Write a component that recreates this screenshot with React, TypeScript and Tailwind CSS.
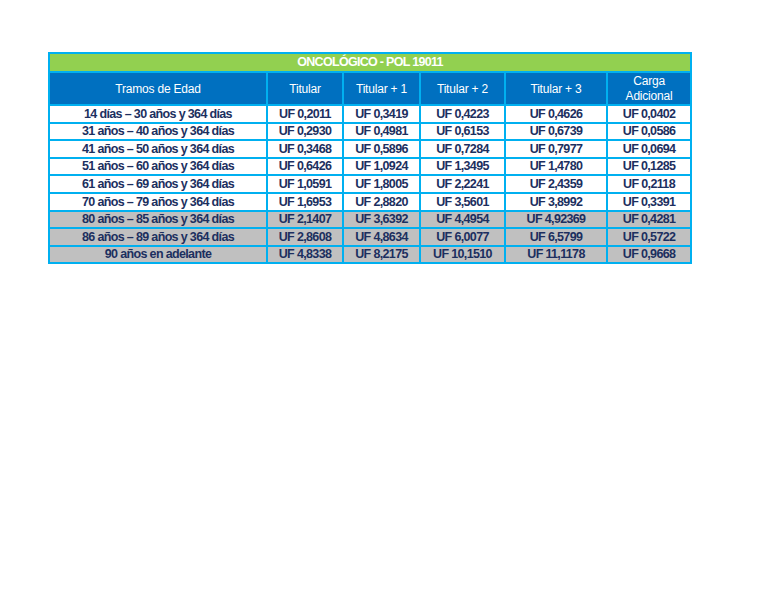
const rows: { edad: string; vals: string[]; gray?: boolean }[] = [
  { edad: '14 días – 30 años y 364 días', vals: ['UF 0,2011', 'UF 0,3419', 'UF 0,4223', 'UF 0,4626', 'UF 0,0402'] },
  { edad: '31 años – 40 años y 364 días', vals: ['UF 0,2930', 'UF 0,4981', 'UF 0,6153', 'UF 0,6739', 'UF 0,0586'] },
  { edad: '41 años – 50 años y 364 días', vals: ['UF 0,3468', 'UF 0,5896', 'UF 0,7284', 'UF 0,7977', 'UF 0,0694'] },
  { edad: '51 años – 60 años y 364 días', vals: ['UF 0,6426', 'UF 1,0924', 'UF 1,3495', 'UF 1,4780', 'UF 0,1285'] },
  { edad: '61 años – 69 años y 364 días', vals: ['UF 1,0591', 'UF 1,8005', 'UF 2,2241', 'UF 2,4359', 'UF 0,2118'] },
  { edad: '70 años – 79 años y 364 días', vals: ['UF 1,6953', 'UF 2,8820', 'UF 3,5601', 'UF 3,8992', 'UF 0,3391'] },
  { edad: '80 años – 85 años y 364 días', vals: ['UF 2,1407', 'UF 3,6392', 'UF 4,4954', 'UF 4,92369', 'UF 0,4281'], gray: true },
  { edad: '86 años – 89 años y 364 días', vals: ['UF 2,8608', 'UF 4,8634', 'UF 6,0077', 'UF 6,5799', 'UF 0,5722'], gray: true },
  { edad: '90 años en adelante', vals: ['UF 4,8338', 'UF 8,2175', 'UF 10,1510', 'UF 11,1178', 'UF 0,9668'], gray: true },
];

const headers = ['Titular', 'Titular + 1', 'Titular + 2', 'Titular + 3'];

export default function App() {
  return (
    <div className="min-h-[594px] w-[768px] bg-white pl-[48px] pt-[52px] font-['Liberation_Sans',Arial,sans-serif]">
      <table className="w-[642px] table-fixed border-collapse border-2 border-[#00b0f0] text-[12.5px] leading-none">
        <colgroup>
          <col className="w-[218px]" />
          <col className="w-[76px]" />
          <col className="w-[77px]" />
          <col className="w-[85px]" />
          <col className="w-[102px]" />
          <col className="w-[84px]" />
        </colgroup>
        <thead>
          <tr className="h-[19px] bg-[#92d050]">
            <th colSpan={6} className="border-2 border-[#00b0f0] p-0 text-center font-bold tracking-[-0.7px] text-white">
              ONCOLÓGICO - POL 19011
            </th>
          </tr>
          <tr className="h-[33px] bg-[#0070c0] text-[12px] tracking-[-0.2px] text-white">
            <th className="border-2 border-[#00b0f0] p-0 font-normal">Tramos de Edad</th>
            {headers.map((h) => (
              <th key={h} className="border-2 border-[#00b0f0] p-0 font-normal">
                {h}
              </th>
            ))}
            <th className="border-2 border-[#00b0f0] p-0 font-normal leading-[15px]">
              Carga
              <br />
              Adicional
            </th>
          </tr>
        </thead>
        <tbody className="font-bold tracking-[-0.65px] text-[#1c2f5f]">
          {rows.map((r) => (
            <tr key={r.edad} className={`h-[17.6px] ${r.gray ? 'bg-[#c0c0c0]' : 'bg-white'}`}>
              <td className="border-2 border-[#00b0f0] p-0 text-center">{r.edad}</td>
              {r.vals.map((v, i) => (
                <td key={i} className="border-2 border-[#00b0f0] p-0 text-center">
                  {v}
                </td>
              ))}
            </tr>
          ))}
        </tbody>
      </table>
    </div>
  );
}
